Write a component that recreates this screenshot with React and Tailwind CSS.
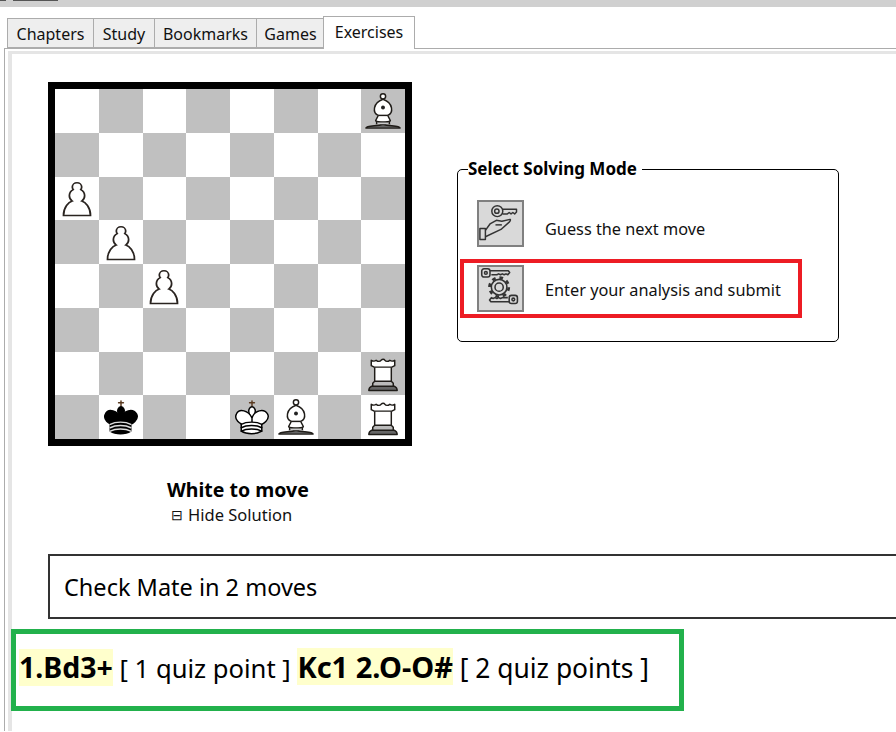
const SQUARES = {
  "0-7": "wb",
  "2-0": "wp",
  "3-1": "wp",
  "4-2": "wp",
  "6-7": "wr",
  "7-1": "bk",
  "7-4": "wk",
  "7-5": "wb",
  "7-7": "wr",
};

function Pawn() {
  return (
    <path
      transform="translate(22.5 -3) scale(1.2 1.1) translate(-22.5 0)"
      d="M22.5 9c-2.21 0-4 1.790-4 4 0 .89.29 1.710.78 2.380C17.330 16.500 16 18.590 16 21c0 2.030.94 3.840 2.410 5.030C15.410 27.090 11 31.580 11 39.500h23c0-7.920-4.410-12.410-7.410-13.470C28.060 24.840 29 23.030 29 21c0-2.410-1.330-4.500-3.280-5.620.49-.67.78-1.490.78-2.380 0-2.210-1.790-4-4-4z"
      fill="#fff"
      stroke="#2a2420"
      strokeWidth="1.500"
    />
  );
}

function Bishop() {
  return (
    <g stroke="#1f1c18" strokeWidth="1.500" strokeLinejoin="round" fill="#fff">
      <path d="M7 38.500c4-1.500 10-.5 15.500-2.500 5.500 2 11.500 1 15.500 2.500 1 .4 2 1 2 1.500H5c0-.5 1-1.100 2-1.500z" fill="#666" />
      <path d="M16 36v-3.500h13V36" fill="#ccc" />
      <path d="M15 32.500c2.500 1.500 12.500 1.500 15 0-.5-2-2-3-2.500-5.500 5.500-2.500 6-12.500-5-16.500-11 4-10.500 14-5 16.500-.5 2.500-2 3.500-2.500 5.500z" />
      <circle cx="22.500" cy="7.500" r="2.700" />
      <path d="M17.500 27h10" fill="none" />
      <circle cx="22.500" cy="19" r="2" fill="#222" stroke="none" />
    </g>
  );
}

function Rook() {
  return (
    <g stroke="#1f1c18" strokeWidth="1.500" strokeLinejoin="round" fill="#fff">
      <path d="M8 40.500c0-2 1-3.500 3-4.500h23c2 1 3 2.500 3 4.500z" fill="#666" />
      <path d="M12 36v-3l2-2h17l2 2v3z" fill="#bbb" />
      <path d="M14 31V15.500h17V31z" />
      <path d="M10.500 9.500c2 1.200 3.500 1.200 5 0 2 1.500 4 1.500 5 0 1.500-1.500 3-1.500 4 0 1 1.500 3 1.500 5 0 1.500 1.200 3 1.200 5 0v5.500l-3 1.500H13.500l-3-1.500z" />
    </g>
  );
}

function King({ black }) {
  const fill = black ? "#000" : "#fff";
  const line = black ? "#ddd" : "#000";
  return (
    <g fill="none" stroke="#000" strokeWidth="1.500" strokeLinecap="round" strokeLinejoin="round">
      <path d="M22.500 11.630V6M20 8h5" stroke="#5a3a20" />
      <path d="M22.500 25s4.500-7.500 3-10.500c0 0-1-2.500-3-2.500s-3 2.500-3 2.500c-1.500 3 3 10.500 3 10.500" fill={fill} />
      <path d="M11.500 37c5.500 3.500 15.500 3.500 21 0v-7s9-4.500 6-10.500c-4-6.500-13.500-3.500-16 4V27v-3.500c-3.500-7.500-13-10.500-16-4-3 6 5 10 5 10V37z" fill={fill} />
      <path d="M11.500 30c5.500-3 15.500-3 21 0m-21 3.500c5.500-3 15.500-3 21 0m-21 3.500c5.500-3 15.500-3 21 0" stroke={line} />
    </g>
  );
}

function Piece({ code }) {
  return (
    <svg viewBox="0 0 45 45" className="w-[44px] h-[44px] shrink-0 blur-[0.4px]">
      {code === "wp" && <Pawn />}
      {code === "wb" && <Bishop />}
      {code === "wr" && <Rook />}
      {code === "wk" && <King />}
      {code === "bk" && <King black />}
    </svg>
  );
}

function Board() {
  const cells = [];
  for (let r = 0; r < 8; r++) {
    for (let c = 0; c < 8; c++) {
      const code = SQUARES[`${r}-${c}`];
      cells.push(
        <div
          key={`${r}-${c}`}
          className={`flex items-center justify-center overflow-hidden ${(r + c) % 2 ? "bg-[#c0c0c0]" : "bg-white"}`}
        >
          {code && <Piece code={code} />}
        </div>
      );
    }
  }
  return (
    <div className="w-[364px] h-[364px] border-[7px] border-black grid grid-cols-8 grid-rows-8">
      {cells}
    </div>
  );
}

function KeyHandIcon() {
  return (
    <svg viewBox="0 0 47 47" className="w-full h-full blur-[0.3px]" fill="none" stroke="#333" strokeWidth="1.600" strokeLinejoin="round">
      <circle cx="20" cy="10" r="6" />
      <circle cx="19.500" cy="10" r="2.400" />
      <path d="M26 8h15v3l-2 2-2-1.500-2 1.500-2-1.500-2 1.500h-5" />
      <rect x="1" y="29" width="6" height="12" />
      <path d="M7 31l5-7 7-4 6 1 9-2c1 1 0 2-1 3l-9 8-17 8" />
      <path d="M18 25h7" />
    </svg>
  );
}

function GearKeysIcon() {
  return (
    <svg viewBox="0 0 47 47" className="w-full h-full blur-[0.3px]" fill="none" stroke="#333" strokeWidth="1.700" strokeLinejoin="round">
      <circle cx="22" cy="22" r="4.500" />
      <circle cx="22" cy="22" r="8.500" />
      <circle cx="22" cy="22" r="10.500" strokeWidth="3" strokeDasharray="4 4.250" />
      <rect x="3" y="2" width="9" height="9" rx="2.500" />
      <circle cx="7.500" cy="6.500" r="1.500" />
      <path d="M12 4h20l1.500 2-2 2.500-2-1-2 1-2-1-2 1-2-1-2 1h-6" />
      <rect x="33" y="31" width="9" height="9" rx="2.500" />
      <circle cx="37.500" cy="35.500" r="1.500" />
      <path d="M33 38H13l-1.500-2 2-2.500 2 1 2-1 2 1 2-1 2 1 2-1h6" />
    </svg>
  );
}

function ModeRow({ icon, label, boxed }) {
  return (
    <div
      className={
        boxed
          ? "flex items-center w-[342px] h-[59px] border-[4px] border-[#ed1c24] pl-[13px] -ml-[8px] mt-[12px]"
          : "flex items-start w-[342px] h-[47px] pl-[17px] -ml-[8px] mt-[19px]"
      }
    >
      <div className="w-[47px] h-[47px] bg-[#d9d9d9] border-2 border-[#808080] shrink-0">{icon}</div>
      <span className={`ml-[21px] text-[16.300px] leading-[24px] text-[#111] ${boxed ? "mt-[2px]" : "mt-[17px]"}`}>{label}</span>
    </div>
  );
}

function Tab({ label, active, width }) {
  return (
    <div
      className={
        active
          ? "h-[33px] bg-white border border-b-0 border-[#acacac] flex justify-center pt-[4px] -ml-px relative z-10"
          : "h-[30px] mb-px bg-[#eeeeee] border border-r-0 border-[#acacac] flex justify-center pt-[4px] last:border-r"
      }
      style={{ width }}
    >
      <span className="text-[16px] leading-[22px] text-[#111]">{label}</span>
    </div>
  );
}

export default function App() {
  return (
    <div className="w-[896px] h-[732px] overflow-hidden bg-white font-['Noto_Sans',sans-serif] text-black">
      <div className="h-[7px] bg-[#d0d0d0] relative">
        <div className="absolute left-0 top-0 w-[6px] h-px bg-[#555]" />
        <div className="absolute left-[13px] top-0 w-[45px] h-px bg-[#555]" />
      </div>

      {/* tabs */}
      <div className="flex items-end h-[42px] pl-[7px]">
        <Tab label="Chapters" width={86} />
        <Tab label="Study" width={61} />
        <Tab label="Bookmarks" width={102} />
        <Tab label="Games" width={68} />
        <Tab label="Exercises" width={92} active />
      </div>

      <div className="ml-[4px] -mt-px border-l border-t border-[#acacac] pl-[3px] pt-[2px]">
        <div className="border-l-[4px] border-t-[3px] border-[#e5e5e5] h-[680px]">
          <div className="pl-[36px] pt-[28px]">
            <div className="flex">
              <Board />
              <fieldset className="ml-[45px] mt-[75px] w-[382px] h-[185px] border border-black rounded-[5px] px-[10px]">
                <legend className="pr-[5px] text-[17px] font-bold leading-[24px]">Select Solving Mode</legend>
                <ModeRow icon={<KeyHandIcon />} label="Guess the next move" />
                <ModeRow icon={<GearKeysIcon />} label="Enter your analysis and submit" boxed />
              </fieldset>
            </div>

            <div className="ml-[119px] mt-[32px] text-[19.500px] font-bold leading-[24px]">White to move</div>
            <div className="ml-[123px] mt-px flex items-center text-[16.500px] leading-[24px] text-[#111]">
              <span className="text-[14px] w-[17px]">⊟</span>
              Hide Solution
            </div>

            <div className="mt-[27px] w-[900px] h-[65px] border-2 border-[#333] flex items-center pl-[14px] pt-[2px] text-[23.500px]">
              Check Mate in 2 moves
            </div>
          </div>

          <div className="-ml-px mt-[10px] w-[673px] h-[82px] border-[5px] border-[#22b14c] pl-[3px] pt-[14px]">
            <div className="flex items-baseline leading-[37px] whitespace-pre">
              <span className="text-[28.500px] font-bold bg-[#ffffcc]">1.Bd3+</span>
              <span className="text-[25.600px]"> [ 1 quiz point ] </span>
              <span className="text-[29px] font-bold bg-[#ffffcc]">Kc1 2.O-O#</span>
              <span className="text-[26.400px]"> [ 2 quiz points ]</span>
            </div>
          </div>
        </div>
      </div>
    </div>
  );
}
